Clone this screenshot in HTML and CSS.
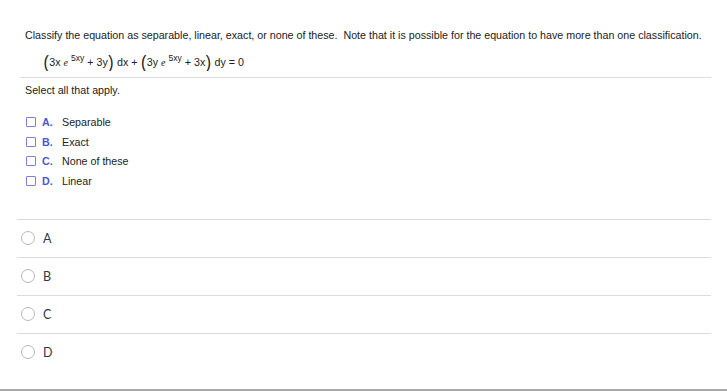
FILE: index.html
```html
<!DOCTYPE html>
<html>
<head>
<meta charset="utf-8">
<link rel="stylesheet" href="styles.css">
</head>
<body>
<div class="question">
  <p class="prompt">Classify the equation as separable, linear, exact, or none of these.&nbsp; Note that it is possible for the equation to have more than one classification.</p>
  <div class="equation">
    <span class="paren">(</span>3x <i class="e">e</i> <sup>5xy</sup> + 3y<span class="paren">)</span> dx + <span class="paren">(</span>3y <i class="e">e</i> <sup>5xy</sup> + 3x<span class="paren">)</span> dy = 0
  </div>
  <div class="sep"></div>
  <p class="instr">Select all that apply.</p>
  <ul class="choices">
    <li><span class="box"></span><span class="letter">A.</span><span>Separable</span></li>
    <li><span class="box"></span><span class="letter">B.</span><span>Exact</span></li>
    <li><span class="box"></span><span class="letter">C.</span><span>None of these</span></li>
    <li><span class="box"></span><span class="letter">D.</span><span>Linear</span></li>
  </ul>
</div>
<div class="answers">
  <div class="row"><span class="radio"></span><span class="alabel">A</span></div>
  <div class="row"><span class="radio"></span><span class="alabel">B</span></div>
  <div class="row"><span class="radio"></span><span class="alabel">C</span></div>
  <div class="row"><span class="radio"></span><span class="alabel">D</span></div>
</div>
<div class="bottom"></div>
</body>
</html>
```
FILE: styles.css
```css
html, body {
  margin: 0;
  padding: 0;
  background: #fff;
}
body {
  width: 727px;
  height: 391px;
  overflow: hidden;
  position: relative;
  font-family: "Liberation Sans", Arial, sans-serif;
  color: #222;
}
.question {
  padding: 29px 0 0 25px;
  font-size: 10.7px;
}
.prompt {
  margin: 0;
  line-height: 12px;
}
.equation {
  margin: 12px 0 0 18px;
  height: 18px;
  line-height: 18px;
  font-size: 10.7px;
  white-space: nowrap;
}
.paren {
  font-size: 16px;
  line-height: 18px;
  display: inline-block;
  vertical-align: top;
  transform: scaleY(1.12);
  margin: 0 0.5px;
}
.e {
  font-family: "Liberation Serif", serif;
  font-size: 10px;
}
sup {
  font-size: 8.5px;
  vertical-align: 5px;
  line-height: 0;
}
.sep {
  margin: 6px 0 0 -5px;
  width: 691px;
  height: 1px;
  background: #dedbef;
}
.instr {
  margin: 6px 0 0 0;
  line-height: 12px;
}
.choices {
  list-style: none;
  margin: 16px 0 0 1px;
  padding: 0;
}
.choices li {
  display: flex;
  align-items: center;
  height: 19.7px;
}
.box {
  width: 8px;
  height: 8px;
  border: 1.5px solid #7d80e0;
  border-radius: 1px;
  margin-right: 6px;
}
.letter {
  color: #4b55d4;
  font-weight: bold;
  width: 20px;
}
.answers {
  margin: 28px 0 0 17px;
  width: 694px;
}
.row {
  height: 37px;
  border-top: 1px solid #dcdcdc;
  display: flex;
  align-items: center;
  font-family: Lato, sans-serif;
  font-size: 12.5px;
  color: #2d3b45;
}
.radio {
  width: 12px;
  height: 12px;
  border: 1px solid #b8b8b8;
  border-radius: 50%;
  margin: 0 8px 0 4px;
}
.bottom {
  position: absolute;
  left: 0;
  right: 0;
  bottom: 0;
  height: 2px;
  background: #a9a9a9;
}
```
